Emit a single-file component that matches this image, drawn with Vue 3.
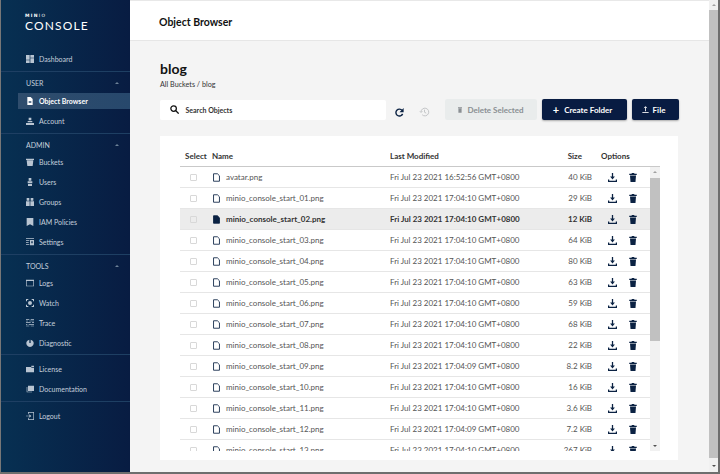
<script setup>
const groups = [
  { items: [{ t: 'Dashboard', i: 'dash' }] },
  { label: 'USER', items: [{ t: 'Object Browser', i: 'file', active: true }, { t: 'Account', i: 'account' }] },
  { label: 'ADMIN', items: [{ t: 'Buckets', i: 'bucket' }, { t: 'Users', i: 'user' }, { t: 'Groups', i: 'groups' }, { t: 'IAM Policies', i: 'iam' }, { t: 'Settings', i: 'settings' }] },
  { label: 'TOOLS', items: [{ t: 'Logs', i: 'logs' }, { t: 'Watch', i: 'watch' }, { t: 'Trace', i: 'trace' }, { t: 'Diagnostic', i: 'diag' }] },
  { items: [{ t: 'License', i: 'license' }, { t: 'Documentation', i: 'docs' }] },
  { items: [{ t: 'Logout', i: 'logout' }] },
]
const icons = {
  dash: 'M0 0h5.500v7H0zM6.500 0H12v4H6.500zM6.500 5H12v7H6.500zM0 8h5.500v4H0z',
  file: 'M2 0h5l3 3v9H2zM4 6h4v1H4zM4 8h4v1H4z',
  account: 'M4 1h4v4H4zM2.500 6h7v2h-7zM0 9h12v3H0z',
  bucket: 'M0 1h12v2H0zM1 3.500h10l-1 8.500H2z',
  user: 'M4 0h4v4H4zM2.500 5h7v3h-7zM3 9h6v3H3z',
  groups: 'M1 0h4v4H1zM7 0h4v4H7zM0 5h5.500v7H0zM6.500 5H12v7H6.500z',
  iam: 'M1 0h10v12L6 9.500 1 12z',
  settings: 'M0 0h12v1H0zM0 3h5v1H0zM0 6h4v1H0zM0 9h5v1H0zM6 3h6v8H6zM8 5v3h2V5z',
  logs: 'M0 1h12v10H0zM1 3v7h10V3z',
  watch: 'M0 0h3.500v1.500H1.500V3.500H0zM8.500 0H12v3.500h-1.500V1.500h-2zM0 8.500h1.500v2h2V12H0zM10.500 8.500H12V12H8.500v-1.500h2zM6 3a3 3 0 1 1 0 6 3 3 0 0 1 0-6z',
  trace: 'M0 0h5v1H0zM7 0h5v1H7zM0 2.500h3v1H0zM5 2.500h7v1H5zM0 5h7v1H0zM9 5h3v1H9zM0 7.500h2v1H0zM4 7.500h8v1H4zM0 10h5v1H0zM7 10h5v1H7z',
  diag: 'M5 1v5h2V1a5.500 5.500 0 1 1-2 0z',
  license: 'M0 3h12v8H0zM8 1h4v3H8z',
  docs: 'M3 1h9v8H3zM1 3v8h8v-1H2V3z',
  logout: 'M3 0h9v12H3V8.500h1V11h7V1H4v2.500H3zM0 5.500h5V3.500L8 6 5 8.500v-2H0z',
}
const rows = [
  ['avatar.png', 'Fri Jul 23 2021 16:52:56 GMT+0800', '40 KiB'],
  ['minio_console_start_01.png', 'Fri Jul 23 2021 17:04:10 GMT+0800', '29 KiB'],
  ['minio_console_start_02.png', 'Fri Jul 23 2021 17:04:10 GMT+0800', '12 KiB', true],
  ['minio_console_start_03.png', 'Fri Jul 23 2021 17:04:10 GMT+0800', '64 KiB'],
  ['minio_console_start_04.png', 'Fri Jul 23 2021 17:04:10 GMT+0800', '80 KiB'],
  ['minio_console_start_05.png', 'Fri Jul 23 2021 17:04:10 GMT+0800', '63 KiB'],
  ['minio_console_start_06.png', 'Fri Jul 23 2021 17:04:10 GMT+0800', '59 KiB'],
  ['minio_console_start_07.png', 'Fri Jul 23 2021 17:04:10 GMT+0800', '68 KiB'],
  ['minio_console_start_08.png', 'Fri Jul 23 2021 17:04:10 GMT+0800', '22 KiB'],
  ['minio_console_start_09.png', 'Fri Jul 23 2021 17:04:09 GMT+0800', '8.2 KiB'],
  ['minio_console_start_10.png', 'Fri Jul 23 2021 17:04:10 GMT+0800', '16 KiB'],
  ['minio_console_start_11.png', 'Fri Jul 23 2021 17:04:10 GMT+0800', '3.6 KiB'],
  ['minio_console_start_12.png', 'Fri Jul 23 2021 17:04:09 GMT+0800', '7.2 KiB'],
  ['minio_console_start_13.png', 'Fri Jul 23 2021 17:04:10 GMT+0800', '267 KiB'],
]
</script>

<template>
  <div class="app">
    <aside class="side">
      <div class="logo">
        <div class="logo-top">MIN<span>IO</span></div>
        <div class="logo-main">CONSOLE</div>
      </div>
      <div v-for="(g, gi) in groups" :key="gi" class="group" :class="'g' + gi">
        <div v-if="g.label" class="glabel"><span>{{ g.label }}</span><i class="caret"></i></div>
        <div v-for="it in g.items" :key="it.t" class="nav" :class="{ active: it.active }">
          <svg class="nicon" viewBox="0 0 12 12"><path fill-rule="evenodd" :d="icons[it.i]" /></svg>
          <span>{{ it.t }}</span>
        </div>
      </div>
    </aside>
    <div class="main">
      <header class="top">Object Browser</header>
      <div class="content">
        <h1>blog</h1>
        <div class="crumb">All Buckets / blog</div>
        <div class="tools">
          <div class="search">
            <svg width="9" height="9" viewBox="0 0 13 13" fill="none" stroke="#111" stroke-width="1.800"><circle cx="5.200" cy="5.200" r="4" /><path d="M8 8l4.500 4.500" /></svg>
            <span>Search Objects</span>
          </div>
          <svg class="refresh" width="9" height="9" viewBox="0 0 13 13" fill="none" stroke="#0b2243" stroke-width="2"><path d="M11 8.500A5 5 0 1 1 10.300 3.500" /><path d="M12.500 0v6h-6z" fill="#0b2243" stroke="none" /></svg>
          <svg class="history" width="11" height="10" viewBox="0 0 13 13" fill="none" stroke="#c4c6c8" stroke-width="1.300"><path d="M2 6.500a5 5 0 1 1 1.500 3.600" /><path d="M6.500 3.500v3.300l2.200 1.200M0.500 5.500L2 7.200 3.700 5.500" /></svg>
          <button class="btn del"><svg width="4" height="6" viewBox="0 0 6 8"><path d="M0 0h6v1.200H0zM.6 1.800h4.800V8H.6z" fill="#8a8f93" /></svg>Delete Selected</button>
          <button class="btn dark folder"><span class="plus">+</span>Create Folder</button>
          <button class="btn dark up"><svg width="7" height="7" viewBox="0 0 10 10" fill="none" stroke="#fff" stroke-width="1.200"><path d="M5 7.500V1M3 3l2-2 2 2M.5 9.300h9" /></svg>File</button>
        </div>
        <div class="card">
          <div class="thead">
            <span class="c-sel">Select</span><span class="c-name">Name</span><span class="c-date">Last Modified</span><span class="c-size">Size</span><span class="c-opt">Options</span>
          </div>
          <div class="tbody">
            <div class="rows">
              <div v-for="r in rows" :key="r[0]" class="row" :class="{ sel: r[3] }">
                <span class="c-sel"><i class="check"></i></span>
                <span class="c-name">
                  <svg class="ficon" width="7" height="9" viewBox="0 0 9 11"><path d="M.7.7h5l2.600 2.600v7H.7z" :fill="r[3] ? '#0b2243' : 'none'" stroke="#0b2243" stroke-width="1.100" /></svg>
                  <span>{{ r[0] }}</span>
                </span>
                <span class="c-date">{{ r[1] }}</span>
                <span class="c-size">{{ r[2] }}</span>
                <span class="c-opt">
                  <svg width="9" height="9" viewBox="0 0 12 12" fill="none" stroke="#0b2243"><path stroke-width="1.700" d="M6 0v6" /><path d="M2.800 4.500L6 8.500l3.200-4z" fill="#0b2243" stroke="none" /><path stroke-width="1.700" d="M.8 8.500v2.700h10.400V8.500" /></svg>
                  <svg width="8" height="9" viewBox="0 0 10 12"><path fill="#0b2243" d="M3.500 0h3l.5 1h3v1.500H0V1h3zM1 3.200h8L8.300 12H1.700z" /></svg>
                </span>
              </div>
            </div>
            <div class="sb">
              <i class="up-a"></i>
              <div class="thumb"></div>
              <i class="down-a"></i>
            </div>
          </div>
        </div>
      </div>
    </div>
    <div class="psb">
      <i class="up-a"></i>
      <div class="pthumb"></div>
      <i class="down-a"></i>
    </div>
  </div>
</template>

<style>
html, body { margin: 0; padding: 0; background: #f4f4f4; overflow: hidden; }
</style>

<style scoped>
.app { width: 720px; height: 474px; display: flex; overflow: hidden; box-sizing: border-box; border-left: 1px solid #777; border-right: 2px solid #6e6e6e; border-bottom: 2px solid #6e6e6e; font-family: "Lato", "Open Sans", sans-serif; color: #333; background: #f4f4f4; }
.side { width: 129px; flex: none; background: linear-gradient(90deg, #073052, #081c42); color: #d4dbe4; height: 472px; }
.logo { padding: 14px 0 0 24px; box-sizing: border-box; color: #fff; height: 49px; }
.logo-top { font-family: "DejaVu Sans", sans-serif; font-size: 4.500px; font-weight: 700; line-height: 4px; letter-spacing: 1.300px; }
.logo-top span { font-weight: 400; }
.logo-main { font-family: "Lato", sans-serif; font-size: 12px; line-height: 11px; margin-top: 2px; letter-spacing: 1.150px; font-weight: 400; }
.group { border-bottom: 1px solid #1e3f63; padding-bottom: 2px; }
.g3 { padding-bottom: 1px; }
.g4 { padding-top: 4px; }
.g5 { border: 0; padding-top: 4px; }
.glabel { height: 18px; display: flex; align-items: center; justify-content: space-between; padding: 3px 11px 0 25px; box-sizing: border-box; font-size: 7px; color: #c6d0dc; }
.g1 .glabel { height: 19px; }
.caret { width: 0; height: 0; border: 2px solid transparent; border-bottom: 2px solid #6d8197; border-top: 0; }
.nav { height: 20px; display: flex; align-items: center; margin-left: 17px; padding-left: 8px; font-size: 7px; color: #c6d0dc; gap: 5px; box-sizing: border-box; }
.nav.active { background: linear-gradient(90deg, #2f4d6d, #27486c); color: #fff; font-weight: 700; height: 16px; margin: 2px 0 2px 17px; }
.nicon { width: 8px; height: 8px; fill: #b9c5d2; flex: none; }
.nav.active .nicon { fill: #fff; }
.main { flex: 1; min-width: 0; display: flex; flex-direction: column; }
.top { height: 41px; flex: none; background: #fff; box-sizing: border-box; border-top: 1px solid #e8e8e8; border-bottom: 1px solid #e6e6e6; padding: 0 0 0 29px; line-height: 43px; font-size: 10.500px; font-weight: 700; color: #111; }
.content { padding: 19px 0 0 30px; flex: 1; min-height: 0; display: flex; flex-direction: column; }
h1 { margin: 0; font-size: 14px; line-height: 18px; font-weight: 700; color: #111; }
.crumb { font-size: 7.200px; line-height: 10px; margin-top: 2px; color: #333; }
.tools { display: flex; align-items: center; margin-top: 9px; height: 21px; }
.search { width: 226px; height: 20px; background: #fff; border-radius: 2px; display: flex; align-items: center; padding-left: 10px; box-sizing: border-box; gap: 6.500px; font-size: 7px; font-weight: 700; color: #333; }
.refresh { margin: 5px 0 0 9px; }
.history { margin: 5px 0 0 15px; }
.btn { border: 0; height: 21px; border-radius: 2px; font: 700 8px "Lato", sans-serif; display: flex; align-items: center; justify-content: center; box-sizing: border-box; padding: 0; }
.del { width: 92px; margin-left: 15px; background: #e9ecec; color: #8a8f93; gap: 5px; }
.dark { background: #081c42; color: #fff; box-shadow: 0 1px 2px rgba(0,0,0,.3); }
.folder { width: 85px; margin-left: 5px; gap: 5px; padding-right: 4px; }
.plus { font-size: 11px; line-height: 10px; }
.up { width: 47px; margin-left: 5px; gap: 4px; padding-right: 4px; }
.card { width: 518px; background: #fff; margin-top: 16px; height: 324px; padding: 9px 0 0 20px; box-sizing: border-box; flex: none; }
.thead { display: flex; height: 22px; align-items: center; border-bottom: 1px solid #c9c9c9; font-size: 8px; font-weight: 700; color: #333; width: 480px; box-sizing: border-box; padding-left: 5px; }
.c-sel { width: 27px; flex: none; display: flex; align-items: center; }
.c-name { width: 177px; flex: none; display: flex; align-items: center; gap: 6px; }
.c-date { width: 150px; flex: none; }
.c-size { width: 42px; flex: none; text-align: right; }
.thead .c-name { width: 178px; }
.thead .c-opt { margin-left: 19px; }
.c-opt { display: flex; align-items: center; flex: none; gap: 12px; margin-left: 16px; }
.tbody { display: flex; height: 284px; overflow: hidden; width: 480px; }
.rows { width: 470px; flex: none; }
.row { height: 21px; display: flex; align-items: center; border-bottom: 1px solid #e6e6e6; box-sizing: border-box; padding-left: 10px; font-size: 8px; color: #555; white-space: nowrap; }
.row .c-sel { width: 23px; }
.row .c-size { width: 52px; }
.row.sel { background: #ececec; font-weight: 700; color: #333; }
.check { width: 5px; height: 5px; border: 1px solid #d8d8d8; border-radius: 1px; background: #fff; display: block; }
.sel .check { background: #ececec; }
.ficon { flex: none; }
.sb { width: 10px; flex: none; background: #f1f1f1; display: flex; flex-direction: column; align-items: center; }
.sb .thumb { width: 100%; height: 163px; background: #c1c1c1; margin-top: 5px; }
.sb .down-a { margin-top: auto; margin-bottom: 4px; }
.up-a { width: 0; height: 0; border: 2px solid transparent; border-bottom: 2px solid #a0a0a0; border-top: 0; margin-top: 4px; display: block; }
.down-a { width: 0; height: 0; border: 2px solid transparent; border-top: 2px solid #505050; border-bottom: 0; display: block; }
.psb { width: 9px; flex: none; background: #f1f1f1; display: flex; flex-direction: column; align-items: center; }
.pthumb { width: 100%; height: 448px; background: #c1c1c1; margin-top: 4px; }
.psb .down-a { margin-top: auto; margin-bottom: 5px; }
</style>
